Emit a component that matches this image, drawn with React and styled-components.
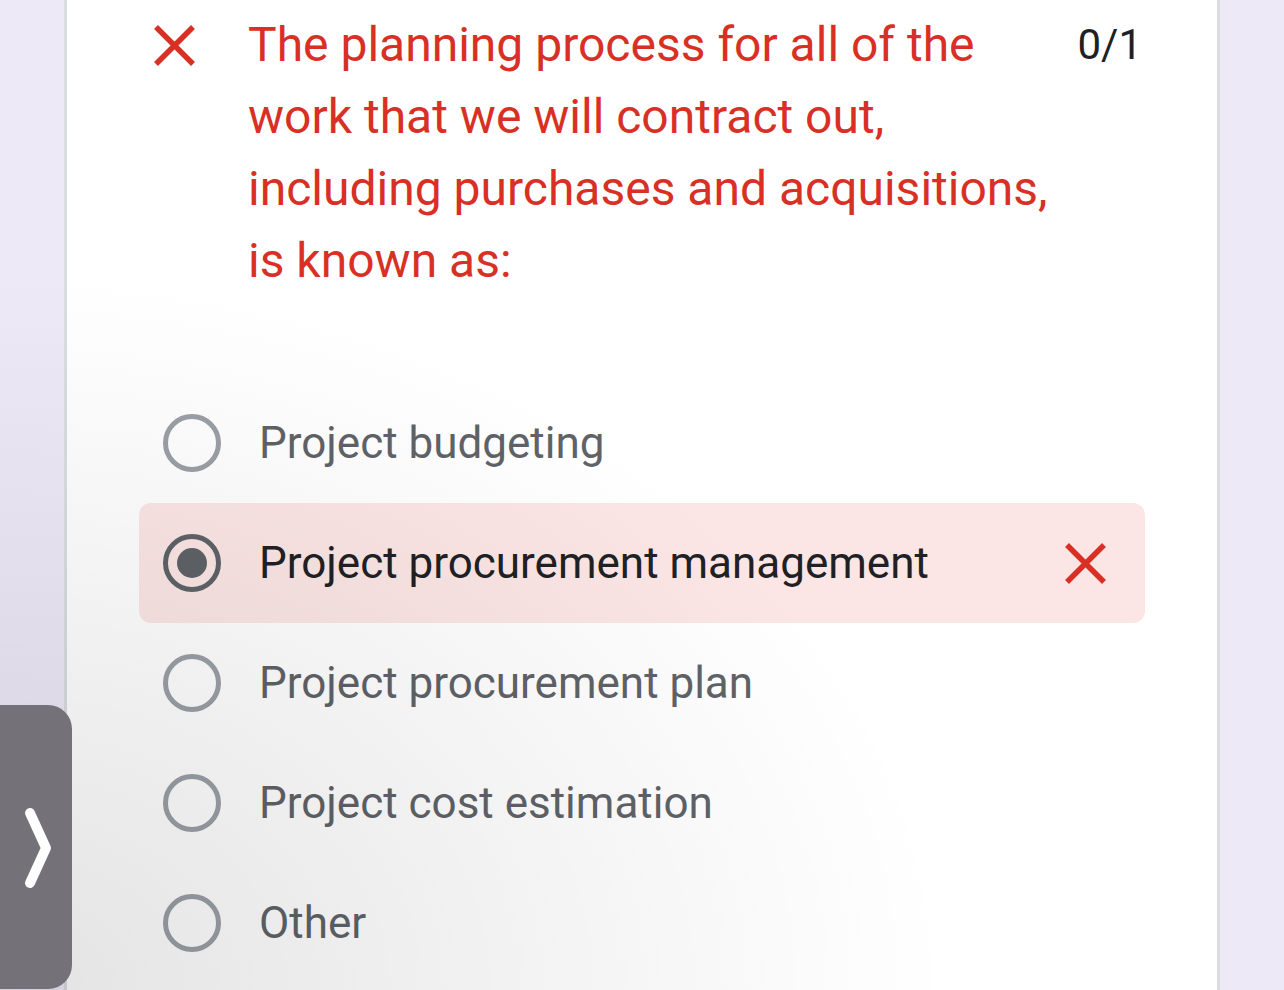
import React from 'react';
import styled, { createGlobalStyle } from 'styled-components';

const GlobalStyle = createGlobalStyle`
  html, body {
    margin: 0;
    padding: 0;
    background: #ede9f7;
    font-family: Roboto, "Noto Sans", sans-serif;
    overflow: hidden;
  }
`;

const Page = styled.div`
  position: relative;
  height: 990px;
  overflow: hidden;
`;

const Card = styled.div`
  margin-left: 64px;
  width: 1150px;
  height: 990px;
  background: #fff;
  border-left: 3px solid #dadce0;
  border-right: 3px solid #dadce0;
`;

const Header = styled.div`
  display: flex;
  align-items: flex-start;
  padding: 9px 75px 0 87px;
`;

const MarkBox = styled.div`
  width: 41px;
  height: 72px;
  display: flex;
  align-items: center;
  margin-right: 53px;
  flex-shrink: 0;
`;

const Title = styled.div`
  flex: 1;
  color: #d93025;
  font-size: 48px;
  line-height: 72px;
  max-width: 820px;
`;

const Score = styled.div`
  margin-left: auto;
  color: #202124;
  font-size: 42px;
  line-height: 72px;
  white-space: nowrap;
`;

const Options = styled.div`
  display: flex;
  flex-direction: column;
  margin: 86px 72px 0;
`;

const Row = styled.div`
  display: flex;
  align-items: center;
  height: 120px;
  padding: 0 39px 0 24px;
  border-radius: 12px;
  background: ${p => (p.$wrong ? '#fbe6e5' : 'transparent')};
`;

const Radio = styled.div`
  width: 58px;
  height: 58px;
  box-sizing: border-box;
  border-radius: 50%;
  border: 5px solid ${p => (p.$checked ? '#5f6368' : '#9aa0a6')};
  display: flex;
  align-items: center;
  justify-content: center;
  flex-shrink: 0;
  margin-right: 38px;
  &::after {
    content: '';
    display: ${p => (p.$checked ? 'block' : 'none')};
    width: 30px;
    height: 30px;
    border-radius: 50%;
    background: #5f6368;
  }
`;

const Label = styled.div`
  flex: 1;
  font-size: 44px;
  color: ${p => (p.$checked ? '#202124' : '#5f6368')};
`;

const Shade = styled.div`
  position: absolute;
  inset: 0;
  pointer-events: none;
  background: radial-gradient(ellipse 950px 720px at 0% 100%, rgba(0, 0, 0, 0.11), rgba(0, 0, 0, 0) 100%);
`;

const SideTab = styled.div`
  position: absolute;
  left: 0;
  top: 705px;
  width: 72px;
  height: 284px;
  background: #747278;
  border-radius: 0 24px 24px 0;
`;

const Chevron = styled.svg`
  position: absolute;
  left: 18px;
  top: 803px;
`;

const Cross = ({ size = 41 }) => (
  <svg width={size} height={size} viewBox="0 0 41 41">
    <path d="M2 2 L39 39 M39 2 L2 39" stroke="#d93025" strokeWidth="5.5" fill="none" />
  </svg>
);

const options = [
  'Project budgeting',
  'Project procurement management',
  'Project procurement plan',
  'Project cost estimation',
  'Other',
];

export default function App() {
  const picked = 1;
  return (
    <Page>
      <GlobalStyle />
      <Card>
        <Header>
          <MarkBox>
            <Cross />
          </MarkBox>
          <Title>
            The planning process for all of the work that we will contract out,
            including purchases and acquisitions, is known as:
          </Title>
          <Score>0/1</Score>
        </Header>
        <Options>
          {options.map((o, i) => (
            <Row key={o} $wrong={i === picked}>
              <Radio $checked={i === picked} />
              <Label $checked={i === picked}>{o}</Label>
              {i === picked && <Cross />}
            </Row>
          ))}
        </Options>
      </Card>
      <Shade />
      <SideTab />
      <Chevron width="40" height="95" viewBox="0 0 40 95">
        <polyline points="12,10 28,45 12,80" fill="none" stroke="#fff" strokeWidth="10" strokeLinecap="round" strokeLinejoin="round" />
      </Chevron>
    </Page>
  );
}
